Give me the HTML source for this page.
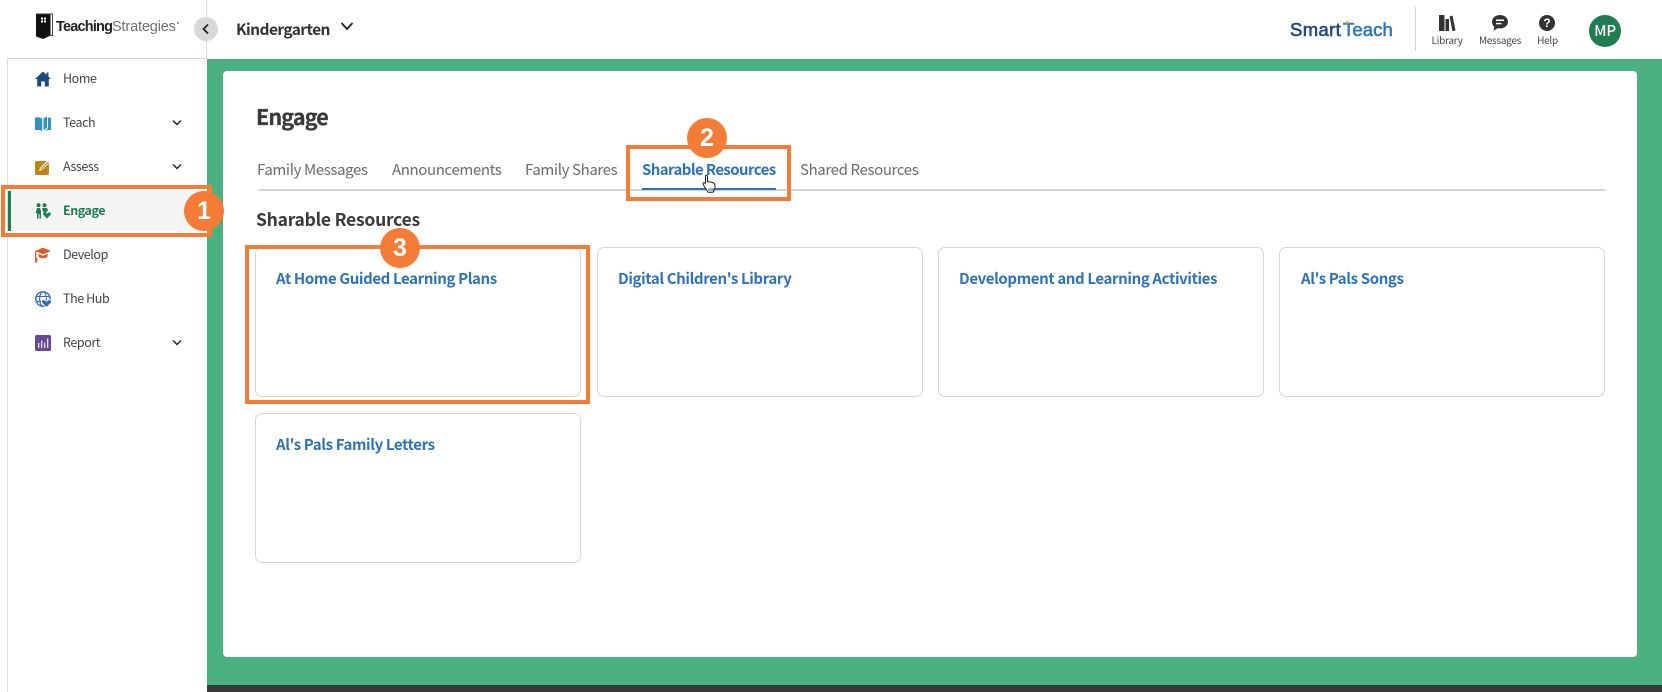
<!DOCTYPE html>
<html lang="en">
<head>
<meta charset="utf-8">
<title>Engage</title>
<style>
html,body{margin:0;padding:0;background:#fff}
body{width:1662px;height:692px;position:relative;overflow:hidden;font-family:"Noto Sans CJK JP","Liberation Sans",sans-serif;color:#3a3a3a}
.a{position:absolute}
.t{position:absolute;white-space:nowrap;line-height:20px}
.nav{font-size:12.500px;color:#444;left:63px;letter-spacing:-.42px}
.tab{font-size:15px;color:#6b6b6b;top:160px;line-height:20px;letter-spacing:-.37px}
.card{position:absolute;background:#fff;border:1px solid #d6d6d6;border-radius:7px;box-sizing:border-box}
.ct{position:absolute;white-space:nowrap;font-size:15px;font-weight:700;color:#2d73b6;line-height:20px;letter-spacing:-.38px}
.box{position:absolute;border:4px solid #f47c36;box-sizing:border-box}
.num{position:absolute;width:40px;height:40px;border-radius:50%;background:#f47c36;color:#fff;font:700 25px/40px "Liberation Sans",sans-serif;text-align:center}
.lb{position:absolute;font-size:10px;line-height:12px;color:#444;transform:translateX(-50%);top:34px;white-space:nowrap;letter-spacing:-.28px}
</style>
</head>
<body>
<!-- header lines -->
<div class="a" style="left:206px;top:0;width:1px;height:59px;background:#d8d8d8"></div>
<div class="a" style="left:7px;top:58px;width:200px;height:1px;background:#d8d8d8"></div>
<div class="a" style="left:7px;top:58px;width:1px;height:634px;background:#dedede"></div>

<!-- green main -->
<div class="a" style="left:207px;top:59px;width:1455px;height:626px;background:#4cb180"></div>
<div class="a" style="left:207px;top:685px;width:1455px;height:7px;background:#383a39"></div>
<div class="a" style="left:223px;top:71px;width:1414px;height:586px;background:#fff;border-radius:4px"></div>

<!-- logo -->
<svg class="a" style="left:35px;top:13px" width="19" height="27" viewBox="0 0 19 27">
<path d="M1 1h14.500v21.500L8 26 1 23.500z" fill="#111"/>
<path d="M1 1h16.500v21.500H15.500" fill="none" stroke="#333" stroke-width=".9"/>
<rect x="6" y="4.500" width="2" height="2" fill="#fff"/><rect x="9" y="4.500" width="2" height="2" fill="#fff"/>
<rect x="6" y="7.500" width="2" height="2" fill="#fff"/><rect x="9" y="7.500" width="2" height="2" fill="#fff"/>
</svg>
<div class="t" style="left:56px;top:17px;font:700 14.500px/20px 'Liberation Sans',sans-serif;color:#222;letter-spacing:-.8px">Teaching</div>
<div class="t" style="left:112px;top:17px;font:400 14.500px/20px 'Liberation Sans',sans-serif;color:#707070;letter-spacing:-.15px">Strategies</div>
<div class="a" style="left:177px;top:22px;width:2px;height:2px;background:#999"></div>

<!-- collapse -->
<div class="a" style="left:194px;top:17px;width:24px;height:24px;border-radius:50%;background:#d8d8d8"></div>
<svg class="a" style="left:200px;top:23px" width="12" height="12" viewBox="0 0 12 12"><path d="M8 1.500 3.500 6 8 10.500" fill="none" stroke="#222" stroke-width="1.800"/></svg>

<div class="t" style="left:236px;top:19px;font-size:15.500px;font-weight:700;color:#333;letter-spacing:-.58px">Kindergarten</div>
<svg class="a" style="left:340px;top:21px" width="14" height="11" viewBox="0 0 14 11"><path d="M1.500 2 7 8l5.500-6" fill="none" stroke="#222" stroke-width="1.800"/></svg>

<!-- SmartTeach -->
<div class="t" style="left:1290px;top:19px;font:400 18.500px/22px 'Liberation Sans',sans-serif;color:#1f4a80;-webkit-text-stroke:.6px #1f4a80;letter-spacing:.35px">Smart</div>
<div class="t" style="left:1343px;top:19px;font:400 18.500px/22px 'Liberation Sans',sans-serif;color:#2d78b8;-webkit-text-stroke:.6px #2d78b8;letter-spacing:.1px">Teach</div>
<div class="a" style="left:1346px;top:21px;width:3px;height:3px;border-radius:50%;background:#f0a030"></div>

<div class="a" style="left:1415px;top:7px;width:1px;height:44px;background:#d4d4d4"></div>

<!-- Library -->
<svg class="a" style="left:1438px;top:14px" width="18" height="18" viewBox="0 0 18 18">
<rect x="1" y="1" width="5.500" height="16" fill="#333"/><rect x="7.500" y="5" width="3.500" height="12" fill="#333"/><path d="M11.500 2.500 14.500 1.500l3 15-3 .8z" fill="#333"/>
</svg>
<div class="lb" style="left:1447px">Library</div>
<!-- Messages -->
<svg class="a" style="left:1491px;top:14px" width="18" height="18" viewBox="0 0 18 18">
<path d="M9 1c4.400 0 8 2.900 8 6.700s-3.600 6.700-8 6.700c-.8 0-1.600-.1-2.300-.3L2.500 17l.9-4C1.900 11.700 1 9.800 1 7.700 1 3.900 4.600 1 9 1z" fill="#333"/>
<rect x="5" y="5.500" width="8" height="1.500" fill="#fff"/><rect x="5" y="8.800" width="5.500" height="1.500" fill="#fff"/>
</svg>
<div class="lb" style="left:1500px">Messages</div>
<!-- Help -->
<div class="a" style="left:1539px;top:15px;width:16px;height:16px;border-radius:50%;background:#333;color:#fff;font:700 12px/16px 'Liberation Sans',sans-serif;text-align:center">?</div>
<div class="lb" style="left:1547.500px">Help</div>
<!-- Avatar -->
<div class="a" style="left:1589px;top:15px;width:32px;height:32px;border-radius:50%;background:#1f7d50;color:#fff;font-size:15px;font-weight:500;line-height:32px;text-align:center;letter-spacing:-.2px">MP</div>

<!-- Sidebar -->
<div class="a" style="left:8px;top:190px;width:199px;height:41px;background:#f5f5f5"></div>
<div class="a" style="left:8px;top:191px;width:3px;height:40px;background:#1f7d50"></div>

<svg class="a" style="left:35px;top:71px" width="16" height="16" viewBox="0 0 16 16"><path d="M8 0.500 0 8h2.200v7.500h4V10.500h3.600v5h4V8H16l-2.500-2.300V1.500h-2v2.300z" fill="#1c4a80"/></svg>
<div class="t nav" style="top:68px">Home</div>

<svg class="a" style="left:35px;top:116px" width="16" height="16" viewBox="0 0 16 16"><path d="M0 1.500c2.400-.5 5-.3 7.200 1V15C5 13.800 2.400 13.600 0 14.200z" fill="#2f92c2"/><path d="M8.500 2.500 12 .3v11.500L8.500 14z" fill="#2f92c2"/><path d="M13 1.500l3 .2v12.500c-2.300-.4-4.700-.2-7 .8l4-2.700z" fill="#2f92c2"/></svg>
<div class="t nav" style="top:112px">Teach</div>
<svg class="a" style="left:172px;top:119px" width="10" height="8" viewBox="0 0 10 8"><path d="M1 1.500 5 5.500l4-4" fill="none" stroke="#222" stroke-width="1.400"/></svg>

<svg class="a" style="left:35px;top:159px" width="16" height="16" viewBox="0 0 16 16"><rect x="0" y="2" width="14" height="14" rx="2" fill="#bd8615"/><path d="M4 12 5 9 13 0.800l2.300 2.200L7 11z" fill="#fff"/><path d="M5.500 10 13 2.500l.8.700L6.300 10.700z" fill="#bd8615"/></svg>
<div class="t nav" style="top:156px">Assess</div>
<svg class="a" style="left:172px;top:163px" width="10" height="8" viewBox="0 0 10 8"><path d="M1 1.500 5 5.500l4-4" fill="none" stroke="#222" stroke-width="1.400"/></svg>

<svg class="a" style="left:35px;top:203px" width="16" height="16" viewBox="0 0 16 16"><circle cx="3.500" cy="2.200" r="2" fill="#1f7d50"/><circle cx="9.500" cy="2.200" r="2" fill="#1f7d50"/><path d="M0.500 10 2 5h3l1 3v7.500H4.500V11h-1v4.500H2V10z" fill="#1f7d50"/><path d="M7 5h5l1 2.500-3 3-2-2z" fill="#1f7d50"/><path d="M12 15.500 8.500 12c-1.300-1.500.8-3.400 2.200-2.200l1.300 1 1.300-1c1.400-1.200 3.500.7 2.200 2.200z" fill="#1f7d50"/></svg>
<div class="t nav" style="top:200px;font-weight:700;color:#1f7d50;letter-spacing:-.45px">Engage</div>

<svg class="a" style="left:35px;top:247px" width="16" height="16" viewBox="0 0 16 16"><path d="M8 .8 16 4 8 7.200 0 4z" fill="#d95a2b"/><path d="M3.500 6.800 8 8.700l4.500-1.900V10c-2.500 1.600-6 1.600-9 0z" fill="#d95a2b"/><rect x="0" y="4" width="1.200" height="8" fill="#d95a2b"/><rect x="0" y="11" width="2.200" height="4.500" fill="#d95a2b"/></svg>
<div class="t nav" style="top:244px">Develop</div>

<svg class="a" style="left:35px;top:291px" width="16" height="16" viewBox="0 0 16 16"><circle cx="8" cy="8" r="7.200" fill="none" stroke="#2e6fb3" stroke-width="1.400"/><ellipse cx="8" cy="8" rx="3.400" ry="7.200" fill="none" stroke="#2e6fb3" stroke-width="1.100"/><path d="M1 5.500h14M1 10.500h14" stroke="#2e6fb3" stroke-width="1.100"/><path d="M11.500 16.500 7 12c-1.600-2 .9-4.300 2.900-2.800l1.600 1.200 1.600-1.200c2-1.500 4.500.8 2.900 2.800z" fill="#2e6fb3" stroke="#fff" stroke-width=".8"/></svg>
<div class="t nav" style="top:288px">The Hub</div>

<svg class="a" style="left:35px;top:335px" width="16" height="16" viewBox="0 0 16 16"><rect width="16" height="16" rx="1.500" fill="#67489a"/><rect x="3" y="8" width="1.300" height="5" fill="#fff" opacity=".85"/><rect x="6" y="5.500" width="1.300" height="7.500" fill="#fff" opacity=".85"/><rect x="9" y="7.500" width="1.300" height="5.500" fill="#fff" opacity=".85"/><rect x="12" y="3.500" width="1.300" height="9.500" fill="#fff" opacity=".85"/></svg>
<div class="t nav" style="top:332px">Report</div>
<svg class="a" style="left:172px;top:339px" width="10" height="8" viewBox="0 0 10 8"><path d="M1 1.500 5 5.500l4-4" fill="none" stroke="#222" stroke-width="1.400"/></svg>

<!-- Content -->
<div class="t" style="left:256px;top:105px;font-size:21.500px;font-weight:700;color:#3a3a3a;line-height:24px;letter-spacing:-.85px;-webkit-text-stroke:.25px #3a3a3a">Engage</div>
<div class="t tab" style="left:257px">Family Messages</div>
<div class="t tab" style="left:392px">Announcements</div>
<div class="t tab" style="left:525px">Family Shares</div>
<div class="t tab" style="left:642px;font-weight:700;color:#2d73b6;letter-spacing:-.6px">Sharable Resources</div>
<div class="t tab" style="left:800px">Shared Resources</div>
<div class="a" style="left:259px;top:189px;width:1346px;height:2px;background:#d4d4d4"></div>
<div class="a" style="left:642px;top:188px;width:134px;height:2px;background:#2d73b6"></div>

<div class="t" style="left:256px;top:209px;font-size:17.500px;font-weight:700;color:#3a3a3a;line-height:22px;letter-spacing:-.25px">Sharable Resources</div>

<div class="card" style="left:255px;top:247px;width:326px;height:150px"></div>
<div class="card" style="left:597px;top:247px;width:326px;height:150px"></div>
<div class="card" style="left:938px;top:247px;width:326px;height:150px"></div>
<div class="card" style="left:1279px;top:247px;width:326px;height:150px"></div>
<div class="card" style="left:255px;top:413px;width:326px;height:150px"></div>
<div class="ct" style="left:276px;top:269px">At Home Guided Learning Plans</div>
<div class="ct" style="left:618px;top:269px">Digital Children's Library</div>
<div class="ct" style="left:959px;top:269px">Development and Learning Activities</div>
<div class="ct" style="left:1301px;top:269px">Al's Pals Songs</div>
<div class="ct" style="left:276px;top:435px">Al's Pals Family Letters</div>

<!-- Annotations -->
<div class="box" style="left:1px;top:185px;width:211px;height:52px"></div>
<div class="num" style="left:184px;top:191px">1</div>
<div class="box" style="left:626px;top:145px;width:165px;height:56px"></div>
<div class="num" style="left:687px;top:118px">2</div>
<div class="box" style="left:245px;top:245px;width:345px;height:159px"></div>
<div class="num" style="left:380px;top:228px">3</div>

<!-- Cursor -->
<svg class="a" style="left:702px;top:174px" width="16" height="20" viewBox="0 0 16 20"><path d="M3.500 1.500c1-.8 2 0 2 1V8l1-.3 1 .3 1.500 0 1.500.5 1.500.8c1 .8 1 2 1 3.500 0 2-1 4-2 5.500H6L2 12 1 9.500c0-1 1.500-1 2.500 0z" fill="#fff" stroke="#222" stroke-width="1"/><path d="M7 14v3M9 14v3M11 14v3" stroke="#333" stroke-width=".8"/></svg>
</body>
</html>
